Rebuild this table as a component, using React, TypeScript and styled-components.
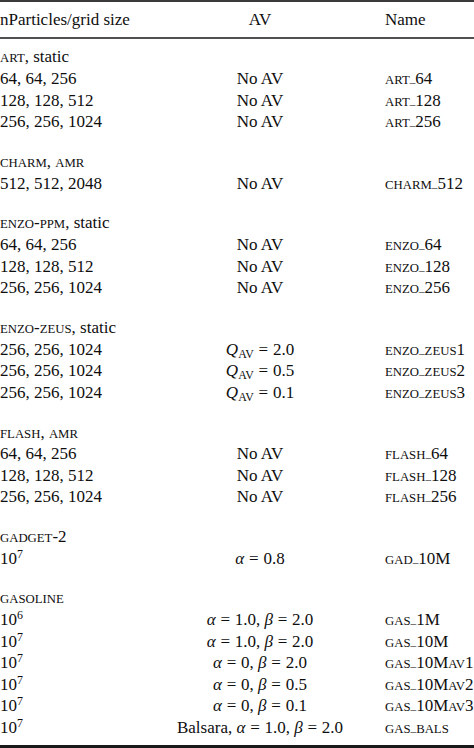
import React from "react";
import styled, { createGlobalStyle } from "styled-components";

const GlobalStyle = createGlobalStyle`
  html, body {
    margin: 0;
    padding: 0;
    background: #ffffff;
  }
  body {
    font-family: "Liberation Serif", "Times New Roman", serif;
    color: #0e0e0e;
  }
`;

const TableWrap = styled.div`
  width: 474px;
  height: 748px;
  display: flex;
  flex-direction: column;
  overflow: hidden;
  font-size: 17px;
`;

const Rule = styled.div<{ $weight: number; $tone: string }>`
  height: ${(p) => p.$weight}px;
  background: ${(p) => p.$tone};
  flex: none;
`;

const Row = styled.div<{ $height?: number; $gapAbove?: number }>`
  display: grid;
  grid-template-columns: 150px 220px 1fr;
  align-items: center;
  height: ${(p) => p.$height ?? 21.6}px;
  margin-top: ${(p) => p.$gapAbove ?? 0}px;
  white-space: nowrap;
  flex: none;
`;

const Cell = styled.div<{ $align?: "left" | "center" }>`
  text-align: ${(p) => p.$align ?? "left"};
  line-height: 1;
`;

const NameCell = styled(Cell)`
  padding-left: 15px;
`;

const Body = styled.div`
  display: flex;
  flex-direction: column;
  padding: 7.7px 0 6.2px;
  flex: 1;
`;

// TeX-style small caps: lowercase runs drawn as capitals at a reduced size
const Small = styled.span`
  text-transform: uppercase;
  font-size: 0.75em;
`;

// the short low dash TeX sets for \_
const Low = styled.span`
  font-size: 0.66em;
  vertical-align: 0.14em;
`;

const Ital = styled.span`
  font-style: italic;
`;

const Sub = styled.span`
  font-size: 0.7em;
  vertical-align: -0.25em;
  line-height: 0;
`;

const Sup = styled.span`
  font-size: 0.7em;
  vertical-align: 0.5em;
  line-height: 0;
`;

const Eq = styled.span`
  margin: 0 0.28em;
`;

const sc = (text: string) =>
  text
    .split(/([a-z]+|_)/)
    .filter((part) => part.length > 0)
    .map((part, i) => {
      if (part === "_") return <Low key={i}>_</Low>;
      if (/^[a-z]+$/.test(part)) return <Small key={i}>{part}</Small>;
      return <React.Fragment key={i}>{part}</React.Fragment>;
    });

type Entry = { size: React.ReactNode; av: React.ReactNode; name: string };
type Group = { title: React.ReactNode; rows: Entry[] };

const noAv = "No AV";

const qav = (v: string) => (
  <>
    <Ital>Q</Ital>
    <Sub>AV</Sub>
    <Eq>=</Eq>
    {v}
  </>
);

const alpha = (a: string) => (
  <>
    <Ital>α</Ital>
    <Eq>=</Eq>
    {a}
  </>
);

const alphaBeta = (a: string, b: string) => (
  <>
    <Ital>α</Ital>
    <Eq>=</Eq>
    {a}, <Ital>β</Ital>
    <Eq>=</Eq>
    {b}
  </>
);

const pow = (e: number) => (
  <>
    10<Sup>{e}</Sup>
  </>
);

const groups: Group[] = [
  {
    title: <>{sc("art")}, static</>,
    rows: [
      { size: "64, 64, 256", av: noAv, name: "art_64" },
      { size: "128, 128, 512", av: noAv, name: "art_128" },
      { size: "256, 256, 1024", av: noAv, name: "art_256" },
    ],
  },
  {
    title: <>{sc("charm")}, {sc("amr")}</>,
    rows: [{ size: "512, 512, 2048", av: noAv, name: "charm_512" }],
  },
  {
    title: <>{sc("enzo-ppm")}, static</>,
    rows: [
      { size: "64, 64, 256", av: noAv, name: "enzo_64" },
      { size: "128, 128, 512", av: noAv, name: "enzo_128" },
      { size: "256, 256, 1024", av: noAv, name: "enzo_256" },
    ],
  },
  {
    title: <>{sc("enzo-zeus")}, static</>,
    rows: [
      { size: "256, 256, 1024", av: qav("2.0"), name: "enzo_zeus1" },
      { size: "256, 256, 1024", av: qav("0.5"), name: "enzo_zeus2" },
      { size: "256, 256, 1024", av: qav("0.1"), name: "enzo_zeus3" },
    ],
  },
  {
    title: <>{sc("flash")}, {sc("amr")}</>,
    rows: [
      { size: "64, 64, 256", av: noAv, name: "flash_64" },
      { size: "128, 128, 512", av: noAv, name: "flash_128" },
      { size: "256, 256, 1024", av: noAv, name: "flash_256" },
    ],
  },
  {
    title: <>{sc("gadget")}-2</>,
    rows: [{ size: pow(7), av: alpha("0.8"), name: "gad_10M" }],
  },
  {
    title: <>{sc("gasoline")}</>,
    rows: [
      { size: pow(6), av: alphaBeta("1.0", "2.0"), name: "gas_1M" },
      { size: pow(7), av: alphaBeta("1.0", "2.0"), name: "gas_10M" },
      { size: pow(7), av: alphaBeta("0", "2.0"), name: "gas_10Mav1" },
      { size: pow(7), av: alphaBeta("0", "0.5"), name: "gas_10Mav2" },
      { size: pow(7), av: alphaBeta("0", "0.1"), name: "gas_10Mav3" },
      {
        size: pow(7),
        av: <>Balsara, {alphaBeta("1.0", "2.0")}</>,
        name: "gas_bals",
      },
    ],
  },
];

const App = () => {
  return (
    <>
      <GlobalStyle />
      <TableWrap>
        <Rule $weight={2} $tone="#3a3a3a" />
        <Row $height={35}>
          <Cell>nParticles/grid size</Cell>
          <Cell $align="center">AV</Cell>
          <NameCell>Name</NameCell>
        </Row>
        <Rule $weight={1.5} $tone="#505050" />
        <Body>
          {groups.map((group, gi) => (
            <React.Fragment key={gi}>
              <Row $gapAbove={gi === 0 ? 0 : 18.2}>
                <Cell>{group.title}</Cell>
                <Cell />
                <Cell />
              </Row>
              {group.rows.map((row, ri) => (
                <Row key={ri}>
                  <Cell>{row.size}</Cell>
                  <Cell $align="center">{row.av}</Cell>
                  <NameCell>{sc(row.name)}</NameCell>
                </Row>
              ))}
            </React.Fragment>
          ))}
        </Body>
        <Rule $weight={3} $tone="#1a1a1a" />
      </TableWrap>
    </>
  );
};

export default App;
